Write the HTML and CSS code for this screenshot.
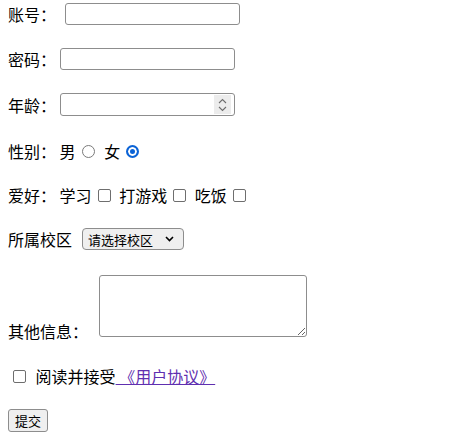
FILE: index.html
```html
<!DOCTYPE html>
<html lang="zh-CN">
<head>
<meta charset="utf-8">
<title>注册</title>
<link rel="stylesheet" href="styles.css">
</head>
<body>
<form class="form">
  <div class="row r1">账号：<input class="field field-a" type="text"></div>
  <div class="row r2">密码：<input class="field" type="password"></div>
  <div class="row r3">年龄：<span class="num-wrap"><input class="field num" type="number"><span class="spin"><svg width="9" height="14" viewBox="0 0 9 14"><path d="M1 5 L4.5 1.5 L8 5" fill="none" stroke="#6d6d6d" stroke-width="1.1"/><path d="M1 9 L4.5 12.5 L8 9" fill="none" stroke="#6d6d6d" stroke-width="1.1"/></svg></span></span></div>
  <div class="row r4">性别： 男<input class="radio" type="radio" name="sex"> 女<input class="radio" type="radio" name="sex" checked></div>
  <div class="row r5">爱好： 学习<input class="check" type="checkbox"> 打游戏<input class="check" type="checkbox"> 吃饭<input class="check" type="checkbox"></div>
  <div class="row r6">所属校区<span class="select-wrap"><select class="school"><option>请选择校区</option></select><svg class="chev" width="9" height="6" viewBox="0 0 9 6"><path d="M1 1 L4.5 4.5 L8 1" fill="none" stroke="#000" stroke-width="1.6"/></svg></span></div>
  <div class="row r7"><span class="other-label">其他信息：</span><textarea class="info"></textarea></div>
  <div class="row r8"><input type="checkbox" class="check agree"> 阅读并接受<a href="#" class="link"> 《用户协议》</a></div>
  <div class="row r9"><button type="button" class="submit">提交</button></div>
</form>
</body>
</html>
```
FILE: styles.css
```css
html, body {
  margin: 0;
  padding: 0;
  background: #fff;
}
body {
  padding: 0 8px;
  font-family: "Microsoft YaHei", "Noto Sans CJK SC", sans-serif;
  font-size: 16px;
  line-height: 22px;
  color: #000;
}
.form {
  display: flex;
  flex-direction: column;
}
.row {
  display: flex;
  align-items: center;
  height: 22px;
  white-space: pre;
}
.r1 { margin-top: 3px; }
.r2 { margin-top: 23px; }
.r3 { margin-top: 23px; height: 23px; }
.r4 { margin-top: 24px; }
.r5 { margin-top: 22px; }
.r6 { margin-top: 22px; }
.r7 { margin-top: 25px; height: 62px; align-items: flex-end; }
.r8 { margin-top: 28px; }
.r9 { margin-top: 22px; height: 23px; }

.field {
  box-sizing: border-box;
  width: 175px;
  height: 22px;
  margin: 0 0 0 4px;
  padding: 1px 2px;
  border: 1px solid #8d8d8d;
  border-radius: 3px;
  background: #fff;
  font-size: 13px;
  outline: none;
}
.field-a { margin-left: 9px; }

.num-wrap {
  position: relative;
  display: flex;
}
.num {
  height: 23px;
  -moz-appearance: textfield;
}
.num::-webkit-inner-spin-button,
.num::-webkit-outer-spin-button {
  -webkit-appearance: none;
  margin: 0;
}
.spin {
  position: absolute;
  right: 4px;
  top: 2px;
  width: 17px;
  height: 19px;
  background: #ececec;
  display: flex;
  align-items: center;
  justify-content: center;
}

.radio {
  -webkit-appearance: none;
  appearance: none;
  box-sizing: border-box;
  width: 13px;
  height: 13px;
  margin: 1px 6px 0 6px;
  border: 1px solid #7a7a7a;
  border-radius: 50%;
  background: #fff;
}
.radio:checked {
  border: 2px solid #0b63d6;
  box-shadow: inset 0 0 0 2px #fff;
  background: #0b63d6;
}

.check {
  -webkit-appearance: none;
  appearance: none;
  box-sizing: border-box;
  width: 13px;
  height: 13px;
  margin: 1px 5px 0 6px;
  border: 1px solid #6e6e6e;
  border-radius: 2px;
  background: #fff;
}
.agree { margin: 1px 6px 0 5px; }

.select-wrap {
  position: relative;
  display: flex;
  margin-left: 10px;
}
.school {
  -webkit-appearance: none;
  appearance: none;
  box-sizing: border-box;
  width: 102px;
  height: 22px;
  margin: 0;
  padding: 0 0 0 5px;
  border: 1px solid #8d8d8d;
  border-radius: 4px;
  background: #efefef;
  color: #000;
  font-family: "Microsoft YaHei", "Noto Sans CJK SC", sans-serif;
  font-size: 13px;
}
.chev {
  position: absolute;
  right: 10px;
  top: 8px;
  pointer-events: none;
}
.other-label {
  margin-bottom: -5px;
}
.info {
  box-sizing: border-box;
  width: 208px;
  height: 62px;
  margin: 0 0 0 11px;
  border: 1px solid #8d8d8d;
  border-radius: 3px;
  outline: none;
}
.link {
  color: #5f2fb0;
  text-decoration: underline;
}
.submit {
  box-sizing: border-box;
  width: 40px;
  height: 23px;
  margin: 0;
  padding: 0;
  border: 1px solid #8d8d8d;
  border-radius: 3px;
  background: #efefef;
  color: #000;
  font-family: "Microsoft YaHei", "Noto Sans CJK SC", sans-serif;
  font-size: 13px;
}
```
